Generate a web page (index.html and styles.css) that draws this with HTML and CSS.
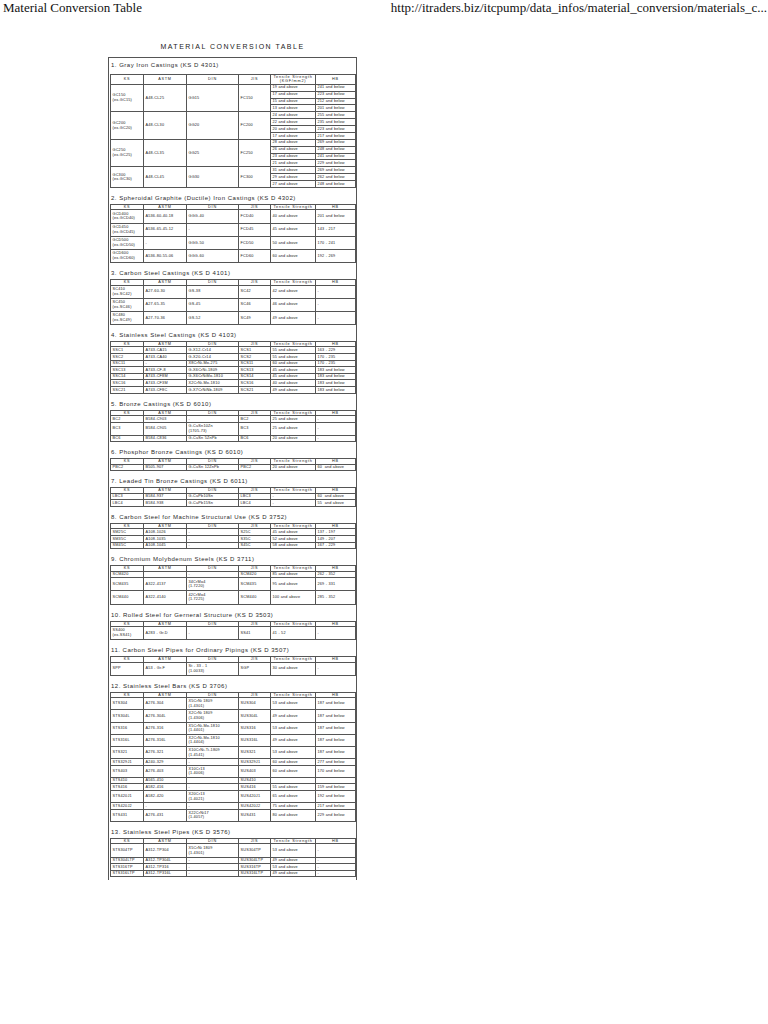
FILE: index.html
```html
<!DOCTYPE html>
<html lang="en">
<head>
<meta charset="utf-8">
<title>Material Conversion Table</title>
<link rel="stylesheet" href="styles.css">
</head>
<body>
<header class="page-head">
  <span>Material Conversion Table</span>
  <span>http://itraders.biz/itcpump/data_infos/material_conversion/materials_c...</span>
</header>

<h1 class="doc-title">MATERIAL CONVERSION TABLE</h1>

<div class="sheet">

  <section class="sec">
    <div class="sec-title">1. Gray Iron Castings (KS D 4301)</div>
    <table class="grid">
      <colgroup><col class="c-ks"><col class="c-astm"><col class="c-din"><col class="c-jis"><col class="c-ts"><col class="c-hb"></colgroup>
      <thead><tr><th>KS</th><th>ASTM</th><th>DIN</th><th>JIS</th><th>Tensile Strength<br>(KGF/mm2)</th><th>HB</th></tr></thead>
      <tbody class="gray">
        <tr><td rowspan="4">GC150<br>(ex-GC15)</td><td rowspan="4">A48-CL25</td><td rowspan="4">GG15</td><td rowspan="4">FC150</td><td>19 and above</td><td>241 and below</td></tr>
        <tr><td>17 and above</td><td>223 and below</td></tr>
        <tr><td>15 and above</td><td>212 and below</td></tr>
        <tr><td>13 and above</td><td>201 and below</td></tr>
        <tr><td rowspan="4">GC200<br>(ex-GC20)</td><td rowspan="4">A48-CL30</td><td rowspan="4">GG20</td><td rowspan="4">FC200</td><td>24 and above</td><td>255 and below</td></tr>
        <tr><td>22 and above</td><td>235 and below</td></tr>
        <tr><td>20 and above</td><td>223 and below</td></tr>
        <tr><td>17 and above</td><td>217 and below</td></tr>
        <tr><td rowspan="4">GC250<br>(ex-GC25)</td><td rowspan="4">A48-CL35</td><td rowspan="4">GG25</td><td rowspan="4">FC250</td><td>28 and above</td><td>269 and below</td></tr>
        <tr><td>26 and above</td><td>248 and below</td></tr>
        <tr><td>23 and above</td><td>241 and below</td></tr>
        <tr><td>21 and above</td><td>229 and below</td></tr>
        <tr><td rowspan="3">GC300<br>(ex-GC30)</td><td rowspan="3">A48-CL45</td><td rowspan="3">GG30</td><td rowspan="3">FC300</td><td>31 and above</td><td>269 and below</td></tr>
        <tr><td>29 and above</td><td>262 and below</td></tr>
        <tr><td>27 and above</td><td>248 and below</td></tr>
      </tbody>
    </table>
  </section>

  <section class="sec">
    <div class="sec-title">2. Spheroidal Graphite (Ductile) Iron Castings (KS D 4302)</div>
    <table class="grid">
      <colgroup><col class="c-ks"><col class="c-astm"><col class="c-din"><col class="c-jis"><col class="c-ts"><col class="c-hb"></colgroup>
      <thead><tr><th>KS</th><th>ASTM</th><th>DIN</th><th>JIS</th><th>Tensile Strength</th><th>HB</th></tr></thead>
      <tbody>
        <tr class="tall"><td>GCD400<br>(ex-GCD40)</td><td>A536-60-40-18</td><td>GGG-40</td><td>FCD40</td><td>40 and above</td><td>201 and below</td></tr>
        <tr class="tall"><td>GCD450<br>(ex-GCD45)</td><td>A536-65-45-12</td><td>-</td><td>FCD45</td><td>45 and above</td><td>143 - 217</td></tr>
        <tr class="tall"><td>GCD500<br>(ex-GCD50)</td><td>-</td><td>GGG-50</td><td>FCD50</td><td>50 and above</td><td>170 - 241</td></tr>
        <tr class="tall"><td>GCD600<br>(ex-GCD60)</td><td>A536-80-55-06</td><td>GGG-60</td><td>FCD60</td><td>60 and above</td><td>192 - 269</td></tr>
      </tbody>
    </table>
  </section>

  <section class="sec">
    <div class="sec-title">3. Carbon Steel Castings (KS D 4101)</div>
    <table class="grid">
      <colgroup><col class="c-ks"><col class="c-astm"><col class="c-din"><col class="c-jis"><col class="c-ts"><col class="c-hb"></colgroup>
      <thead><tr><th>KS</th><th>ASTM</th><th>DIN</th><th>JIS</th><th>Tensile Strength</th><th>HB</th></tr></thead>
      <tbody>
        <tr class="tall"><td>SC410<br>(ex-SC42)</td><td>A27-60-30</td><td>GS-38</td><td>SC42</td><td>42 and above</td><td>-</td></tr>
        <tr class="tall"><td>SC450<br>(ex-SC46)</td><td>A27-65-35</td><td>GS-45</td><td>SC46</td><td>46 and above</td><td>-</td></tr>
        <tr class="tall"><td>SC480<br>(ex-SC49)</td><td>A27-70-36</td><td>GS-52</td><td>SC49</td><td>49 and above</td><td>-</td></tr>
      </tbody>
    </table>
  </section>

  <section class="sec">
    <div class="sec-title">4. Stainless Steel Castings (KS D 4103)</div>
    <table class="grid">
      <colgroup><col class="c-ks"><col class="c-astm"><col class="c-din"><col class="c-jis"><col class="c-ts"><col class="c-hb"></colgroup>
      <thead><tr><th>KS</th><th>ASTM</th><th>DIN</th><th>JIS</th><th>Tensile Strength</th><th>HB</th></tr></thead>
      <tbody>
        <tr><td>SSC1</td><td>A743-CA15</td><td>G-X12-Cr14</td><td>SCS1</td><td>55 and above</td><td>163 - 229</td></tr>
        <tr><td>SSC2</td><td>A743-CA40</td><td>G-X20-Cr14</td><td>SCS2</td><td>55 and above</td><td>170 - 235</td></tr>
        <tr><td>SSC11</td><td>-</td><td>X8CrNi-Mo-275</td><td>SCS11</td><td>60 and above</td><td>170 - 235</td></tr>
        <tr><td>SSC13</td><td>A743-CF-8</td><td>G-X6CrNi-1809</td><td>SCS13</td><td>45 and above</td><td>183 and below</td></tr>
        <tr><td>SSC14</td><td>A743-CF8M</td><td>G-X6CrNiMo-1810</td><td>SCS14</td><td>45 and above</td><td>183 and below</td></tr>
        <tr><td>SSC16</td><td>A743-CF3M</td><td>X2CrNi-Mo-1810</td><td>SCS16</td><td>40 and above</td><td>183 and below</td></tr>
        <tr><td>SSC21</td><td>A743-CF8C</td><td>G-X7CrNiNb-1809</td><td>SCS21</td><td>49 and above</td><td>183 and below</td></tr>
      </tbody>
    </table>
  </section>

  <section class="sec">
    <div class="sec-title">5. Bronze Castings (KS D 6010)</div>
    <table class="grid">
      <colgroup><col class="c-ks"><col class="c-astm"><col class="c-din"><col class="c-jis"><col class="c-ts"><col class="c-hb"></colgroup>
      <thead><tr><th>KS</th><th>ASTM</th><th>DIN</th><th>JIS</th><th>Tensile Strength</th><th>HB</th></tr></thead>
      <tbody>
        <tr><td>BC2</td><td>B584-C903</td><td>-</td><td>BC2</td><td>25 and above</td><td>-</td></tr>
        <tr class="tall"><td>BC3</td><td>B584-C905</td><td>G-CuSn10Zn<br>(1705-73)</td><td>BC3</td><td>25 and above</td><td>-</td></tr>
        <tr><td>BC6</td><td>B584-C836</td><td>G-CuSn 5ZnPb</td><td>BC6</td><td>20 and above</td><td>-</td></tr>
      </tbody>
    </table>
  </section>

  <section class="sec">
    <div class="sec-title">6. Phosphor Bronze Castings (KS D 6010)</div>
    <table class="grid">
      <colgroup><col class="c-ks"><col class="c-astm"><col class="c-din"><col class="c-jis"><col class="c-ts"><col class="c-hb"></colgroup>
      <thead><tr><th>KS</th><th>ASTM</th><th>DIN</th><th>JIS</th><th>Tensile Strength</th><th>HB</th></tr></thead>
      <tbody>
        <tr><td>PBC2</td><td>B505-907</td><td>G-CuSn 12ZnPb</td><td>PBC2</td><td>20 and above</td><td>60&nbsp; and above</td></tr>
      </tbody>
    </table>
  </section>

  <section class="sec">
    <div class="sec-title">7. Leaded Tin Bronze Castings (KS D 6011)</div>
    <table class="grid">
      <colgroup><col class="c-ks"><col class="c-astm"><col class="c-din"><col class="c-jis"><col class="c-ts"><col class="c-hb"></colgroup>
      <thead><tr><th>KS</th><th>ASTM</th><th>DIN</th><th>JIS</th><th>Tensile Strength</th><th>HB</th></tr></thead>
      <tbody>
        <tr><td>LBC3</td><td>B584-937</td><td>G-CuPb10Sn</td><td>LBC3</td><td>-</td><td>60&nbsp; and above</td></tr>
        <tr><td>LBC4</td><td>B584-938</td><td>G-CuPb15Sn</td><td>LBC4</td><td>-</td><td>55&nbsp; and above</td></tr>
      </tbody>
    </table>
  </section>

  <section class="sec">
    <div class="sec-title">8. Carbon Steel for Machine Structural Use (KS D 3752)</div>
    <table class="grid">
      <colgroup><col class="c-ks"><col class="c-astm"><col class="c-din"><col class="c-jis"><col class="c-ts"><col class="c-hb"></colgroup>
      <thead><tr><th>KS</th><th>ASTM</th><th>DIN</th><th>JIS</th><th>Tensile Strength</th><th>HB</th></tr></thead>
      <tbody>
        <tr><td>SM25C</td><td>A108-1026</td><td>-</td><td>S25C</td><td>45 and above</td><td>137 - 197</td></tr>
        <tr><td>SM35C</td><td>A108-1035</td><td>-</td><td>S35C</td><td>52 and above</td><td>149 - 207</td></tr>
        <tr><td>SM45C</td><td>A108-1045</td><td>-</td><td>S45C</td><td>58 and above</td><td>167 - 229</td></tr>
      </tbody>
    </table>
  </section>

  <section class="sec">
    <div class="sec-title">9. Chromium Molybdenum Steels (KS D 3711)</div>
    <table class="grid">
      <colgroup><col class="c-ks"><col class="c-astm"><col class="c-din"><col class="c-jis"><col class="c-ts"><col class="c-hb"></colgroup>
      <thead><tr><th>KS</th><th>ASTM</th><th>DIN</th><th>JIS</th><th>Tensile Strength</th><th>HB</th></tr></thead>
      <tbody>
        <tr><td>SCM420</td><td></td><td>-</td><td>SCM420</td><td>85 and above</td><td>262 - 352</td></tr>
        <tr class="tall"><td>SCM435</td><td>A322-4137</td><td>34CrMo4<br>(1.7220)</td><td>SCM435</td><td>95 and above</td><td>269 - 331</td></tr>
        <tr class="tall"><td>SCM440</td><td>A322-4140</td><td>42CrMo4<br>(1.7225)</td><td>SCM440</td><td>100 and above</td><td>285 - 352</td></tr>
      </tbody>
    </table>
  </section>

  <section class="sec">
    <div class="sec-title">10. Rolled Steel for Gerneral Structure (KS D 3503)</div>
    <table class="grid">
      <colgroup><col class="c-ks"><col class="c-astm"><col class="c-din"><col class="c-jis"><col class="c-ts"><col class="c-hb"></colgroup>
      <thead><tr><th>KS</th><th>ASTM</th><th>DIN</th><th>JIS</th><th>Tensile Strength</th><th>HB</th></tr></thead>
      <tbody>
        <tr class="tall"><td>SS400<br>(ex-SS41)</td><td>A283 - Gr.D</td><td>-</td><td>SS41</td><td>41 - 52</td><td>-</td></tr>
      </tbody>
    </table>
  </section>

  <section class="sec">
    <div class="sec-title">11. Carbon Steel Pipes for Ordinary Pipings (KS D 3507)</div>
    <table class="grid">
      <colgroup><col class="c-ks"><col class="c-astm"><col class="c-din"><col class="c-jis"><col class="c-ts"><col class="c-hb"></colgroup>
      <thead><tr><th>KS</th><th>ASTM</th><th>DIN</th><th>JIS</th><th>Tensile Strength</th><th>HB</th></tr></thead>
      <tbody>
        <tr class="tall"><td>SPP</td><td>A53 - Gr.F</td><td>St - 33 - 1<br>(1.0033)</td><td>SGP</td><td>30 and above</td><td>-</td></tr>
      </tbody>
    </table>
  </section>

  <section class="sec sec-compact">
    <div class="sec-title">12. Stainless Steel Bars (KS D 3706)</div>
    <table class="grid">
      <colgroup><col class="c-ks"><col class="c-astm"><col class="c-din"><col class="c-jis"><col class="c-ts"><col class="c-hb"></colgroup>
      <thead><tr><th>KS</th><th>ASTM</th><th>DIN</th><th>JIS</th><th>Tensile Strength</th><th>HB</th></tr></thead>
      <tbody>
        <tr class="tall"><td>STS304</td><td>A276-304</td><td>X5CrNi 1809<br>(1.4301)</td><td>SUS304</td><td>53 and above</td><td>187 and below</td></tr>
        <tr class="tall"><td>STS304L</td><td>A276-304L</td><td>X2CrNi 1809<br>(1.4306)</td><td>SUS304L</td><td>49 and above</td><td>187 and below</td></tr>
        <tr class="tall"><td>STS316</td><td>A276-316</td><td>X5CrNi-Mo-1810<br>(1.4401)</td><td>SUS316</td><td>53 and above</td><td>187 and below</td></tr>
        <tr class="tall"><td>STS316L</td><td>A276-316L</td><td>X2CrNi-Mo-1810<br>(1.4404)</td><td>SUS316L</td><td>49 and above</td><td>187 and below</td></tr>
        <tr class="tall"><td>STS321</td><td>A276-321</td><td>X10CrNi-Ti-1809<br>(1.4541)</td><td>SUS321</td><td>53 and above</td><td>187 and below</td></tr>
        <tr><td>STS329J1</td><td>A240-329</td><td>-</td><td>SUS329J1</td><td>60 and above</td><td>277 and below</td></tr>
        <tr class="tall"><td>STS403</td><td>A276-403</td><td>X10Cr13<br>(1.4006)</td><td>SUS403</td><td>60 and above</td><td>170 and below</td></tr>
        <tr><td>STS410</td><td>A565-410</td><td></td><td>SUS410</td><td></td><td></td></tr>
        <tr><td>STS416</td><td>A582-416</td><td>-</td><td>SUS416</td><td>55 and above</td><td>159 and below</td></tr>
        <tr class="tall"><td>STS420J1</td><td>A582-420</td><td>X20Cr13<br>(1.4021)</td><td>SUS420J1</td><td>65 and above</td><td>192 and below</td></tr>
        <tr><td>STS420J2</td><td>-</td><td>-</td><td>SUS420J2</td><td>75 and above</td><td>217 and below</td></tr>
        <tr class="tall"><td>STS431</td><td>A276-431</td><td>X22CrNi17<br>(1.4057)</td><td>SUS431</td><td>80 and above</td><td>229 and below</td></tr>
      </tbody>
    </table>
  </section>

  <section class="sec">
    <div class="sec-title">13. Stainless Steel Pipes (KS D 3576)</div>
    <table class="grid">
      <colgroup><col class="c-ks"><col class="c-astm"><col class="c-din"><col class="c-jis"><col class="c-ts"><col class="c-hb"></colgroup>
      <thead><tr><th>KS</th><th>ASTM</th><th>DIN</th><th>JIS</th><th>Tensile Strength</th><th>HB</th></tr></thead>
      <tbody>
        <tr class="tall"><td>STS304TP</td><td>A312-TP304</td><td>X5CrNi 1809<br>(1.4301)</td><td>SUS304TP</td><td>53 and above</td><td>-</td></tr>
        <tr><td>STS304LTP</td><td>A312-TP304L</td><td>-</td><td>SUS304LTP</td><td>49 and above</td><td>-</td></tr>
        <tr><td>STS316TP</td><td>A312-TP316</td><td>-</td><td>SUS316TP</td><td>53 and above</td><td>-</td></tr>
        <tr><td>STS316LTP</td><td>A312-TP316L</td><td>-</td><td>SUS316LTP</td><td>49 and above</td><td>-</td></tr>
      </tbody>
    </table>
  </section>

  <div class="tail"></div>
</div>
</body>
</html>
```

FILE: styles.css
```css
html, body {
  margin: 0;
  padding: 0;
  background: #ffffff;
}

body {
  font-family: "Liberation Sans", Arial, sans-serif;
  color: #222222;
}

.page-head {
  display: flex;
  justify-content: space-between;
  align-items: center;
  height: 16px;
  padding: 0 1px 0 3px;
  font-family: "Liberation Serif", "Times New Roman", serif;
  font-size: 13px;
  line-height: 16px;
  color: #111111;
}

.doc-title {
  width: 249px;
  margin: 27px 0 6px 108px;
  font-size: 7px;
  line-height: 8px;
  font-weight: normal;
  letter-spacing: 1.5px;
  text-align: center;
  color: #222222;
}

.sheet {
  width: 247px;
  margin-left: 108px;
  border: 1px solid #555555;
  border-bottom: none;
}

.sec-title {
  padding: 7px 2px 3px;
  font-size: 6px;
  line-height: 6px;
  letter-spacing: 0.5px;
  white-space: nowrap;
  color: #2a2a2a;
}

.sec:first-child .sec-title {
  padding: 4px 2px 6px;
}

.grid {
  width: 245px;
  margin: 0 1px;
  table-layout: fixed;
  border-collapse: collapse;
}

.c-ks { width: 33px; }
.c-astm { width: 43px; }
.c-din { width: 52px; }
.c-jis { width: 32px; }
.c-ts { width: 45px; }
.c-hb { width: 40px; }

.grid th,
.grid td {
  border: 1px solid #555555;
  font-size: 3.8px;
  letter-spacing: 0.2px;
  white-space: nowrap;
  overflow: hidden;
  vertical-align: middle;
}

.grid th {
  padding: 0;
  line-height: 4.4px;
  font-weight: normal;
  letter-spacing: 0.75px;
  text-align: center;
}

.grid td {
  padding: 0.5px 1.5px;
  line-height: 4.6px;
  text-align: left;
}

.grid tr.tall td {
  padding-top: 1.5px;
  padding-bottom: 1.5px;
}

.sec-compact .grid tr.tall td {
  padding-top: 1px;
  padding-bottom: 1px;
}

.grid tbody.gray td {
  padding-top: 0.65px;
  padding-bottom: 0.65px;
}

.tail {
  height: 3px;
}
```
